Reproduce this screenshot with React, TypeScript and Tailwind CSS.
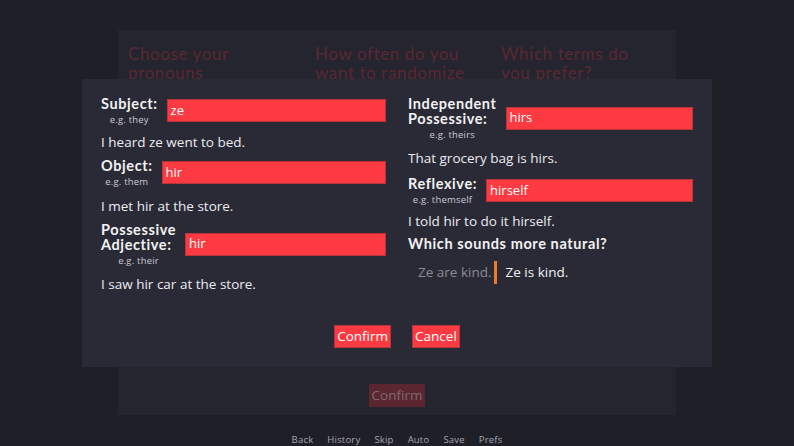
import type { ReactNode } from "react";

const heading = "font-['Lato','Liberation_Sans',sans-serif] font-bold";
const body = "font-['Open_Sans','Liberation_Sans',sans-serif]";

const navItems = ["Back", "History", "Skip", "Auto", "Save", "Prefs"] as const;

function Field({
	label,
	hint,
	value,
}: {
	label: ReactNode;
	hint: string;
	value: string;
}) {
	return (
		<div className="flex items-center gap-[9px]">
			<div className="flex shrink-0 flex-col">
				<div className={`${heading} text-[14.5px] leading-[15px] tracking-[0.6px] text-[#f2f2f2]`}>
					{label}
				</div>
				<div className={`${body} mt-[3px] text-center text-[9.5px] leading-[11px] tracking-[0.2px] text-[#c9c9cf]`}>
					{hint}
				</div>
			</div>
			<div className="flex h-[23px] flex-1 items-center border border-[#b8343a] bg-[#fd3a41] px-[3px]">
				<span className={`${body} text-[13px] text-white`}>{value}</span>
			</div>
		</div>
	);
}

function Sentence({ children }: { children: ReactNode }) {
	return <p className={`${body} text-[13.5px] leading-[18px] text-[#ececf0]`}>{children}</p>;
}

export default function App() {
	return (
		<div className="relative h-[446px] w-[794px] overflow-hidden bg-[#1f1f28]">
			{/* Background screen */}
			<div className="mx-auto mt-[30px] flex h-[385px] w-[558px] flex-col bg-[#252530] px-[10px] pt-[14px]">
				<div className={`${heading} grid grid-cols-[187px_186px_1fr] text-[17px] leading-[19px] font-normal tracking-[0.6px] text-[#5a2832]`}>
					<div>Choose your<br />pronouns</div>
					<div>How often do you<br />want to randomize</div>
					<div>Which terms do<br />you prefer?</div>
				</div>
				<div className="mt-auto mb-[8px] flex justify-center">
					<div className={`${body} flex h-[23px] items-center bg-[#5c2630] px-[3px] text-[13.5px] text-[#7c6a72]`}>
						Confirm
					</div>
				</div>
			</div>

			{/* Bottom nav */}
			<div className={`${body} absolute bottom-0 left-0 flex w-full justify-center gap-[14px] text-[9.5px] leading-[13px] tracking-[0.2px] text-[#a6a6ae]`}>
				{navItems.map((item) => (
					<span key={item}>{item}</span>
				))}
			</div>

			{/* Modal */}
			<div className="absolute top-[79px] left-[82px] flex h-[288px] w-[630px] flex-col bg-[#2a2a37] px-[19px] pt-[17px]">
				<div className="grid grid-cols-2 gap-x-[22px]">
					<div className="flex flex-col">
						<Field label="Subject:" hint="e.g. they" value="ze" />
						<div className="mt-[8px]"><Sentence>I heard ze went to bed.</Sentence></div>
						<div className="mt-[7px]"><Field label="Object:" hint="e.g. them" value="hir" /></div>
						<div className="mt-[10px]"><Sentence>I met hir at the store.</Sentence></div>
						<div className="mt-[7px]">
							<Field label={<>Possessive<br />Adjective:</>} hint="e.g. their" value="hir" />
						</div>
						<div className="mt-[9px]"><Sentence>I saw hir car at the store.</Sentence></div>
					</div>
					<div className="flex flex-col">
						<Field label={<>Independent<br />Possessive:</>} hint="e.g. theirs" value="hirs" />
						<div className="mt-[9px]"><Sentence>That grocery bag is hirs.</Sentence></div>
						<div className="mt-[9px]"><Field label="Reflexive:" hint="e.g. themself" value="hirself" /></div>
						<div className="mt-[7px]"><Sentence>I told hir to do it hirself.</Sentence></div>
						<div className={`${heading} mt-[5px] text-[14.5px] leading-[18px] tracking-[0.6px] text-[#f2f2f2]`}>
							Which sounds more natural?
						</div>
						<div className={`${body} mt-[8px] flex items-center pl-[10px] text-[13.5px]`}>
							<span className="text-[#8a8a92]">Ze are kind.</span>
							<span className="ml-[2px] h-[23px] w-[3px] bg-[#f07a2a]" />
							<span className="ml-[9px] text-[#f2f2f2]">Ze is kind.</span>
						</div>
					</div>
				</div>
				<div className="mt-auto mb-[19px] flex justify-center gap-[21px]">
					<button className={`${body} h-[23px] border border-[#b8343a] bg-[#fd3a41] px-[2px] text-[13.5px] text-white`}>
						Confirm
					</button>
					<button className={`${body} h-[23px] border border-[#b8343a] bg-[#fd3a41] px-[2px] text-[13.5px] text-white`}>
						Cancel
					</button>
				</div>
			</div>
		</div>
	);
}
